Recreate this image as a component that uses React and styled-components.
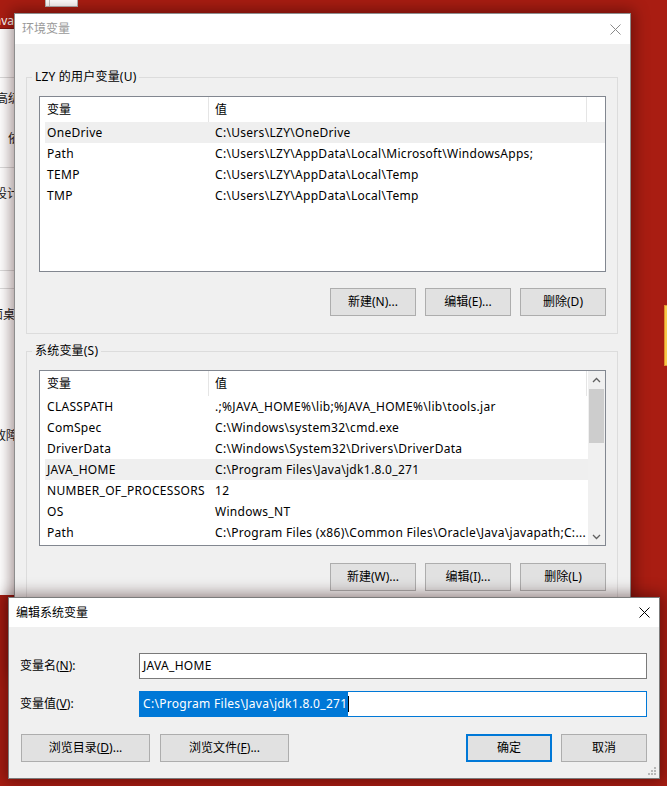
import React from 'react';
import styled, { createGlobalStyle, css } from 'styled-components';

const FONT = `"Noto Sans", "Noto Sans CJK SC", sans-serif`;

const GlobalStyle = createGlobalStyle`
  html, body { margin: 0; padding: 0; }
  body { font-family: ${FONT}; font-size: 12px; color: #000; }
  * { box-sizing: border-box; }
`;

const Desktop = styled.div`
  position: relative;
  width: 667px;
  height: 786px;
  overflow: hidden;
  background: #a91d12;
`;

const TaskThumb = styled.div`
  position: absolute;
  left: 45px;
  top: -1px;
  width: 33px;
  height: 8px;
  background: #fff;
  border: 1px solid #b5b5b5;
  display: grid;
  grid-template-columns: 4px 1fr;
  & > span { border-right: 1px solid #c8c8c8; }
`;

const Sticky = styled.div`
  position: absolute;
  left: 664px;
  top: 305px;
  width: 6px;
  height: 61px;
  background: #f7c748;
  border: 1px solid #e0902e;
`;

const BackWindow = styled.div`
  position: absolute;
  left: 0;
  top: 0;
  width: 14px;
  height: 596px;
  overflow: hidden;
  display: flex;
  flex-direction: column;
`;

const BackTitle = styled.div`
  height: 29px;
  padding-top: 13px;
  display: flex;
  justify-content: flex-end;
  color: #fff;
  line-height: 16px;
  white-space: nowrap;
  border-bottom: 1px solid #7e1510;
`;

const BackItem = styled.div`
  height: ${p => p.$h}px;
  padding-top: ${p => p.$pt || 0}px;
  background: #fff;
  display: flex;
  justify-content: flex-end;
  line-height: 16px;
  white-space: nowrap;
  color: #1a1a1a;
  border-bottom: ${p => (p.$line ? '1px solid #dadada' : 'none')};
  & > span { margin-right: ${p => p.$shift || 0}px; }
`;

const Window = styled.div`
  position: absolute;
  left: ${p => p.$x}px;
  top: ${p => p.$y}px;
  width: ${p => p.$w}px;
  height: ${p => p.$h}px;
  border: 1px solid ${p => (p.$active ? '#7b7b7b' : '#8d8d8d')};
  background: #f0f0f0;
  box-shadow: 0 0 14px 3px rgba(40, 0, 0, 0.45);
  display: flex;
  flex-direction: column;
`;

const TitleBar = styled.div`
  height: ${p => p.$h}px;
  flex: none;
  background: #fff;
  display: flex;
  align-items: center;
  justify-content: space-between;
  padding-left: 7px;
  padding-right: ${p => p.$pr}px;
  color: ${p => (p.$active ? '#000' : '#999')};
  line-height: 16px;
`;

const CloseIcon = ({ color }) => (
  <svg width="11" height="11" viewBox="0 0 11 11">
    <path d="M0.5 0.5L10.5 10.5M10.5 0.5L0.5 10.5" stroke={color} strokeWidth="1" fill="none" />
  </svg>
);

const MainBody = styled.div`
  flex: 1;
  padding: 25px 12px 0 11px;
  display: flex;
  flex-direction: column;
`;

const Group = styled.fieldset`
  margin: 0;
  padding: 11px 11px 17px 12px;
  border: 1px solid #dcdcdc;
  min-width: 0;
  & + & { margin-top: 9px; }
`;

const Legend = styled.legend`
  padding: 0 3px;
  margin-left: -7px;
  line-height: 16px;
  font-size: 12px;
  letter-spacing: 0.2px;
`;

const List = styled.div`
  height: 176px;
  border: 1px solid #828790;
  background: #fff;
  display: flex;
`;

const ListMain = styled.div`
  flex: 1;
  min-width: 0;
  padding-left: 5px;
`;

const Cols = css`
  display: grid;
  grid-template-columns: 164px 378px;
`;

const HeaderRow = styled.div`
  ${Cols};
  height: 25px;
`;

const HeaderCell = styled.div`
  display: flex;
  align-items: center;
  padding-left: ${p => p.$pl}px;
  border-right: 1px solid #e5e5e5;
  line-height: 16px;
`;

const Row = styled.div`
  ${Cols};
  height: 21px;
  align-items: center;
  line-height: 16px;
  background: ${p => (p.$sel ? '#efefef' : 'transparent')};
`;

const Cell = styled.div`
  padding-left: ${p => p.$pl}px;
  white-space: nowrap;
  overflow: hidden;
  letter-spacing: 0.3px;
`;

const ScrollBar = styled.div`
  width: 17px;
  flex: none;
  background: #f0f0f0;
  display: flex;
  flex-direction: column;
`;

const ScrollArrow = styled.div`
  height: 17px;
  display: flex;
  align-items: center;
  justify-content: center;
`;

const ScrollThumb = styled.div`
  height: 54px;
  margin: 1px 1px 0;
  background: #cdcdcd;
`;

const ScrollTrack = styled.div`
  flex: 1;
`;

const Chevron = ({ up }) => (
  <svg width="9" height="6" viewBox="0 0 9 6">
    <path d={up ? 'M1 5L4.5 1.5L8 5' : 'M1 1L4.5 4.5L8 1'} stroke="#606060" strokeWidth="1.3" fill="none" />
  </svg>
);

const ButtonRow = styled.div`
  display: flex;
  justify-content: ${p => p.$justify || 'flex-end'};
  gap: ${p => p.$gap || 9}px;
  margin-top: ${p => p.$mt || 16}px;
`;

const ButtonGroup = styled.div`
  display: flex;
  gap: ${p => p.$gap}px;
  margin-left: ${p => p.$ml || 0}px;
`;

const Button = styled.button`
  width: ${p => p.$w || 86}px;
  height: 28px;
  padding: 0;
  border: 1px solid #adadad;
  background: #e1e1e1;
  font-family: ${FONT};
  font-size: 12px;
  line-height: 16px;
  color: #000;
  ${p => p.$default && css`border: 2px solid #0078d7;`}
`;

const EditBody = styled.div`
  flex: 1;
  padding: 26px 12px 0 11px;
  position: relative;
`;

const FieldGrid = styled.div`
  display: grid;
  grid-template-columns: 119px 1fr;
  row-gap: 12px;
  align-items: center;
`;

const Label = styled.label`
  line-height: 16px;
`;

const TextBox = styled.div`
  height: 26px;
  border: 1px solid ${p => (p.$focus ? '#0078d7' : '#7a7a7a')};
  background: #fff;
  display: flex;
  align-items: ${p => (p.$focus ? 'stretch' : 'center')};
  padding-left: ${p => (p.$focus ? 0 : 3)}px;
  line-height: 16px;
  white-space: nowrap;
  letter-spacing: 0.3px;
`;

const Selection = styled.span`
  display: flex;
  align-items: center;
  padding: 0 1px 0 3px;
  background: #0078d7;
  color: #fff;
`;

const Caret = styled.span`
  width: 1px;
  margin: 4px 0;
  background: #000;
`;

const Grip = styled.svg`
  position: absolute;
  right: 2px;
  bottom: 2px;
`;

const userVars = [
  ['OneDrive', 'C:\\Users\\LZY\\OneDrive', true],
  ['Path', 'C:\\Users\\LZY\\AppData\\Local\\Microsoft\\WindowsApps;'],
  ['TEMP', 'C:\\Users\\LZY\\AppData\\Local\\Temp'],
  ['TMP', 'C:\\Users\\LZY\\AppData\\Local\\Temp'],
];

const sysVars = [
  ['CLASSPATH', '.;%JAVA_HOME%\\lib;%JAVA_HOME%\\lib\\tools.jar'],
  ['ComSpec', 'C:\\Windows\\system32\\cmd.exe'],
  ['DriverData', 'C:\\Windows\\System32\\Drivers\\DriverData'],
  ['JAVA_HOME', 'C:\\Program Files\\Java\\jdk1.8.0_271', true],
  ['NUMBER_OF_PROCESSORS', '12'],
  ['OS', 'Windows_NT'],
  ['Path', 'C:\\Program Files (x86)\\Common Files\\Oracle\\Java\\javapath;C:...'],
];

const VarList = ({ rows, scroll }) => (
  <List>
    <ListMain>
      <HeaderRow>
        <HeaderCell $pl={2}>变量</HeaderCell>
        <HeaderCell $pl={6}>值</HeaderCell>
      </HeaderRow>
      {rows.map(([k, v, sel]) => (
        <Row key={k} $sel={sel}>
          <Cell $pl={2}>{k}</Cell>
          <Cell $pl={6}>{v}</Cell>
        </Row>
      ))}
    </ListMain>
    {scroll && (
      <ScrollBar>
        <ScrollArrow><Chevron up /></ScrollArrow>
        <ScrollThumb />
        <ScrollTrack />
        <ScrollArrow><Chevron /></ScrollArrow>
      </ScrollBar>
    )}
  </List>
);

export default function App() {
  return (
    <Desktop>
      <GlobalStyle />
      <TaskThumb><span /></TaskThumb>
      <Sticky />
      <BackWindow>
        <BackTitle><span>Java</span></BackTitle>
        <BackItem $h={49} $line />
        <BackItem $h={40} $pt={13} $shift={-6}><span>高级</span></BackItem>
        <BackItem $h={50} $pt={13} $line $shift={-6}><span>依</span></BackItem>
        <BackItem $h={103} $pt={18} $line $shift={-5}><span>设计</span></BackItem>
        <BackItem $h={18} $line />
        <BackItem $h={100} $pt={18} $shift={-1}><span>面桌</span></BackItem>
        <BackItem $h={206} $pt={39} $shift={-4}><span>故障</span></BackItem>
      </BackWindow>

      <Window $x={14} $y={13} $w={617} $h={660}>
        <TitleBar $h={30} $pr={9}>
          <span>环境变量</span>
          <CloseIcon color="#8a8a8a" />
        </TitleBar>
        <MainBody>
          <Group>
            <Legend>LZY 的用户变量(U)</Legend>
            <VarList rows={userVars} />
            <ButtonRow>
              <Button>新建(N)...</Button>
              <Button>编辑(E)...</Button>
              <Button>删除(D)</Button>
            </ButtonRow>
          </Group>
          <Group>
            <Legend>系统变量(S)</Legend>
            <VarList rows={sysVars} scroll />
            <ButtonRow $mt={17}>
              <Button>新建(W)...</Button>
              <Button>编辑(I)...</Button>
              <Button>删除(L)</Button>
            </ButtonRow>
          </Group>
        </MainBody>
      </Window>

      <Window $x={8} $y={597} $w={652} $h={182} $active>
        <TitleBar $h={29} $pr={9} $active>
          <span>编辑系统变量</span>
          <CloseIcon color="#000" />
        </TitleBar>
        <EditBody>
          <FieldGrid>
            <Label>变量名(<u>N</u>):</Label>
            <TextBox>JAVA_HOME</TextBox>
            <Label>变量值(<u>V</u>):</Label>
            <TextBox $focus>
              <Selection>C:\Program Files\Java\jdk1.8.0_271</Selection>
              <Caret />
            </TextBox>
          </FieldGrid>
          <ButtonRow $justify="space-between" $mt={17}>
            <ButtonGroup $gap={10} $ml={1}>
              <Button $w={129}>浏览目录(<u>D</u>)...</Button>
              <Button $w={129}>浏览文件(<u>F</u>)...</Button>
            </ButtonGroup>
            <ButtonGroup $gap={9}>
              <Button $default>确定</Button>
              <Button>取消</Button>
            </ButtonGroup>
          </ButtonRow>
          <Grip width="9" height="9" viewBox="0 0 9 9">
            {[[6, 0], [3, 3], [6, 3], [0, 6], [3, 6], [6, 6]].map(([x, y]) => (
              <rect key={`${x}-${y}`} x={x} y={y} width="2" height="2" fill="#b8b8b8" />
            ))}
          </Grip>
        </EditBody>
      </Window>
    </Desktop>
  );
}
